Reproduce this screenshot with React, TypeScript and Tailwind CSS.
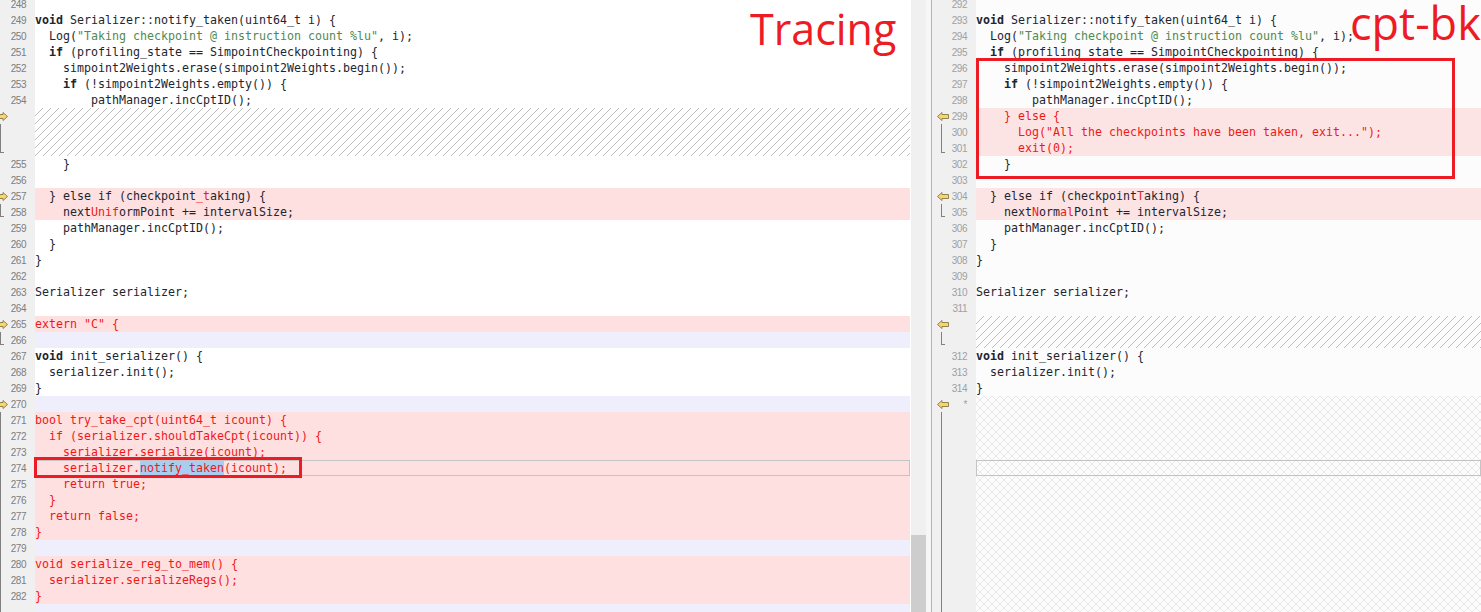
import React from "react"

type Kind = "plain" | "pink" | "lav" | "hatch" | "cross"
type Conn = "mid" | "end"

type Line = {
  n?: string
  code?: React.ReactNode
  kind?: Kind
  arrow?: boolean
  conn?: Conn
  current?: boolean
}

const Str = ({ children }: { children: React.ReactNode }) => (
  <span className="text-[#4f8a4f]">{children}</span>
)
const Red = ({ children }: { children: React.ReactNode }) => (
  <span className="text-[#f01818]">{children}</span>
)
const Kw = ({ children }: { children: React.ReactNode }) => (
  <span className="font-bold text-[#20262c]">{children}</span>
)

const leftLines: Line[] = [
  { n: "248" },
  { n: "249", code: <><Kw>void</Kw>{" Serializer::notify_taken(uint64_t i) {"}</> },
  { n: "250", code: <>{"  Log("}<Str>{'"Taking checkpoint @ instruction count %lu"'}</Str>{", i);"}</> },
  { n: "251", code: <>{"  "}<Kw>if</Kw>{" (profiling_state == SimpointCheckpointing) {"}</> },
  { n: "252", code: "    simpoint2Weights.erase(simpoint2Weights.begin());" },
  { n: "253", code: <>{"    "}<Kw>if</Kw>{" (!simpoint2Weights.empty()) {"}</> },
  { n: "254", code: "        pathManager.incCptID();" },
  { kind: "hatch", arrow: true },
  { kind: "hatch", conn: "mid" },
  { kind: "hatch", conn: "end" },
  { n: "255", code: "    }" },
  { n: "256" },
  { n: "257", kind: "pink", arrow: true, code: <>{"  } else if (checkpoint"}<Red>_t</Red>{"aking) {"}</> },
  { n: "258", kind: "pink", conn: "end", code: <>{"    next"}<Red>Unif</Red>{"ormPoint += intervalSize;"}</> },
  { n: "259", code: "    pathManager.incCptID();" },
  { n: "260", code: "  }" },
  { n: "261", code: "}" },
  { n: "262" },
  { n: "263", code: "Serializer serializer;" },
  { n: "264" },
  { n: "265", kind: "pink", arrow: true, code: <Red>{'extern "C" {'}</Red> },
  { n: "266", kind: "lav", conn: "end" },
  { n: "267", code: <><Kw>void</Kw>{" init_serializer() {"}</> },
  { n: "268", code: "  serializer.init();" },
  { n: "269", code: "}" },
  { n: "270", kind: "lav", arrow: true },
  { n: "271", kind: "pink", conn: "mid", code: <Red>{"bool try_take_cpt(uint64_t icount) {"}</Red> },
  { n: "272", kind: "pink", conn: "mid", code: <Red>{"  if (serializer.shouldTakeCpt(icount)) {"}</Red> },
  { n: "273", kind: "pink", conn: "mid", code: <Red>{"    serializer.serialize(icount);"}</Red> },
  {
    n: "274",
    kind: "pink",
    conn: "mid",
    current: true,
    code: (
      <Red>
        {"    serializer."}
        <span className="bg-[#a9cdf0]">notify_taken</span>
        {"(icount);"}
      </Red>
    ),
  },
  { n: "275", kind: "pink", conn: "mid", code: <Red>{"    return true;"}</Red> },
  { n: "276", kind: "pink", conn: "mid", code: <Red>{"  }"}</Red> },
  { n: "277", kind: "pink", conn: "mid", code: <Red>{"  return false;"}</Red> },
  { n: "278", kind: "pink", conn: "mid", code: <Red>{"}"}</Red> },
  { n: "279", kind: "lav", conn: "mid" },
  { n: "280", kind: "pink", conn: "mid", code: <Red>{"void serialize_reg_to_mem() {"}</Red> },
  { n: "281", kind: "pink", conn: "mid", code: <Red>{"  serializer.serializeRegs();"}</Red> },
  { n: "282", kind: "pink", conn: "mid", code: <Red>{"}"}</Red> },
  { kind: "lav", conn: "mid" },
]

const rightLines: Line[] = [
  { n: "292" },
  { n: "293", code: <><Kw>void</Kw>{" Serializer::notify_taken(uint64_t i) {"}</> },
  { n: "294", code: <>{"  Log("}<Str>{'"Taking checkpoint @ instruction count %lu"'}</Str>{", i);"}</> },
  { n: "295", code: <>{"  "}<Kw>if</Kw>{" (profiling_state == SimpointCheckpointing) {"}</> },
  { n: "296", code: "    simpoint2Weights.erase(simpoint2Weights.begin());" },
  { n: "297", code: <>{"    "}<Kw>if</Kw>{" (!simpoint2Weights.empty()) {"}</> },
  { n: "298", code: "        pathManager.incCptID();" },
  { n: "299", kind: "pink", arrow: true, code: <Red>{"    } else {"}</Red> },
  { n: "300", kind: "pink", conn: "mid", code: <Red>{'      Log("All the checkpoints have been taken, exit...");'}</Red> },
  { n: "301", kind: "pink", conn: "end", code: <Red>{"      exit(0);"}</Red> },
  { n: "302", code: "    }" },
  { n: "303" },
  { n: "304", kind: "pink", arrow: true, code: <>{"  } else if (checkpoint"}<Red>T</Red>{"aking) {"}</> },
  { n: "305", kind: "pink", conn: "end", code: <>{"    next"}<Red>N</Red>{"orm"}<Red>al</Red>{"Point += intervalSize;"}</> },
  { n: "306", code: "    pathManager.incCptID();" },
  { n: "307", code: "  }" },
  { n: "308", code: "}" },
  { n: "309" },
  { n: "310", code: "Serializer serializer;" },
  { n: "311" },
  { kind: "hatch", arrow: true },
  { kind: "hatch", conn: "end" },
  { n: "312", code: <><Kw>void</Kw>{" init_serializer() {"}</> },
  { n: "313", code: "  serializer.init();" },
  { n: "314", code: "}" },
  { n: "*", kind: "cross", arrow: true },
  { kind: "cross", conn: "mid" },
  { kind: "cross", conn: "mid" },
  { kind: "cross", conn: "mid" },
  { kind: "cross", conn: "mid", current: true },
  { kind: "cross", conn: "mid" },
  { kind: "cross", conn: "mid" },
  { kind: "cross", conn: "mid" },
  { kind: "cross", conn: "mid" },
  { kind: "cross", conn: "mid" },
  { kind: "cross", conn: "mid" },
  { kind: "cross", conn: "mid" },
  { kind: "cross", conn: "mid" },
  { kind: "cross", conn: "mid" },
]

// 8px tiles, so the pattern stays continuous across the 16px rows
const hatchBg =
  "bg-size-[8px_8px] bg-[linear-gradient(135deg,transparent_45%,#bebebe_45%,#bebebe_55%,transparent_55%)]"
const crossBg =
  "bg-size-[8px_8px] bg-[linear-gradient(135deg,transparent_45%,#e8e8e8_45%,#e8e8e8_55%,transparent_55%),linear-gradient(45deg,transparent_45%,#e8e8e8_45%,#e8e8e8_55%,transparent_55%)]"

function Arrow({ side }: { side: "left" | "right" }) {
  // the left pane's arrow points right and is cut off by the window edge
  const path = side === "left" ? "M0.5 2.5H7V0.5L11.5 4.5L7 8.5V6.5H0.5Z" : "M11.5 2.5H5V0.5L0.5 4.5L5 8.5V6.5H11.5Z"
  return (
    <svg
      width="12"
      height="9"
      viewBox="0 0 12 9"
      className={side === "left" ? "absolute left-[-4px] top-[4px]" : "absolute left-[5px] top-[4px]"}
    >
      <path d={path} fill="#fbd46a" stroke="#8f8350" strokeWidth="1" />
    </svg>
  )
}

function Row({ line, side }: { line: Line; side: "left" | "right" }) {
  const { kind = "plain" } = line
  const isLeft = side === "left"
  const bg =
    kind === "pink"
      ? isLeft
        ? "bg-[#ffe0e0]"
        : "bg-[#fde4e4]"
      : kind === "lav"
        ? "bg-[#eeeefc]"
        : kind === "hatch"
          ? hatchBg
          : kind === "cross"
            ? crossBg
            : ""
  const connX = isLeft ? "left-0" : "left-[9px]"

  return (
    <div className="flex h-4 shrink-0">
      <div
        className={`relative flex shrink-0 items-center justify-end bg-[#f0f0f0] pr-[9px] font-['Liberation_Sans',sans-serif] text-[10px] tracking-[-0.5px] ${
          isLeft ? "w-[35px] text-[#7d7d7d]" : "w-[44px] text-[#a0a0a0]"
        }`}
      >
        {line.arrow && <Arrow side={side} />}
        {line.conn === "mid" && <span className={`absolute top-0 h-4 w-px bg-[#808080] ${connX}`} />}
        {line.conn === "end" && (
          <span className={`absolute top-0 h-[13px] w-[4px] border-b border-l border-[#808080] ${connX}`} />
        )}
        {line.n}
      </div>
      <div
        className={`min-w-0 flex-1 overflow-hidden whitespace-pre font-['DejaVu_Sans_Mono',monospace] text-[11.63px] leading-4 text-[#1c2630] ${bg} ${
          line.current ? "outline outline-1 -outline-offset-1 outline-[#c4c4c4]" : ""
        }`}
      >
        {line.code}
      </div>
    </div>
  )
}

function Pane({ lines, side }: { lines: Line[]; side: "left" | "right" }) {
  return (
    <div className="-mt-1 flex flex-col">
      {lines.map((line, i) => (
        <Row key={i} line={line} side={side} />
      ))}
    </div>
  )
}

export default function App() {
  return (
    <div className="relative flex h-[612px] w-[1481px] overflow-hidden bg-white">
      <div className="w-[910px] shrink-0 bg-white">
        <Pane lines={leftLines} side="left" />
      </div>
      <div className="ml-px flex w-[15px] shrink-0 flex-col justify-end bg-[#f0f0f0]">
        <div className="h-[77px] bg-[#cdcdcd]" />
      </div>
      <div className="w-[5px] shrink-0 bg-[#f6f6f6]" />
      <div className="min-w-0 flex-1 border-l border-[#b4b4b4] bg-[#fcfcfc]">
        <Pane lines={rightLines} side="right" />
      </div>

      {/* annotations drawn on top of the screenshot */}
      <div className="absolute left-[750px] top-0 whitespace-nowrap font-['Open_Sans',sans-serif] text-[43px] leading-[58px] text-[#ed1c24]">
        Tracing
      </div>
      <div className="absolute left-[1350px] top-[-6px] whitespace-nowrap font-['Open_Sans',sans-serif] text-[45px] leading-[58px] text-[#ed1c24]">
        cpt-bk
      </div>
      <div className="absolute left-[34px] top-[457px] h-[21px] w-[268px] border-[3px] border-[#ed1c24]" />
      <div className="absolute left-[976px] top-[58px] h-[121px] w-[479px] border-[3px] border-[#ed1c24]" />
    </div>
  )
}
